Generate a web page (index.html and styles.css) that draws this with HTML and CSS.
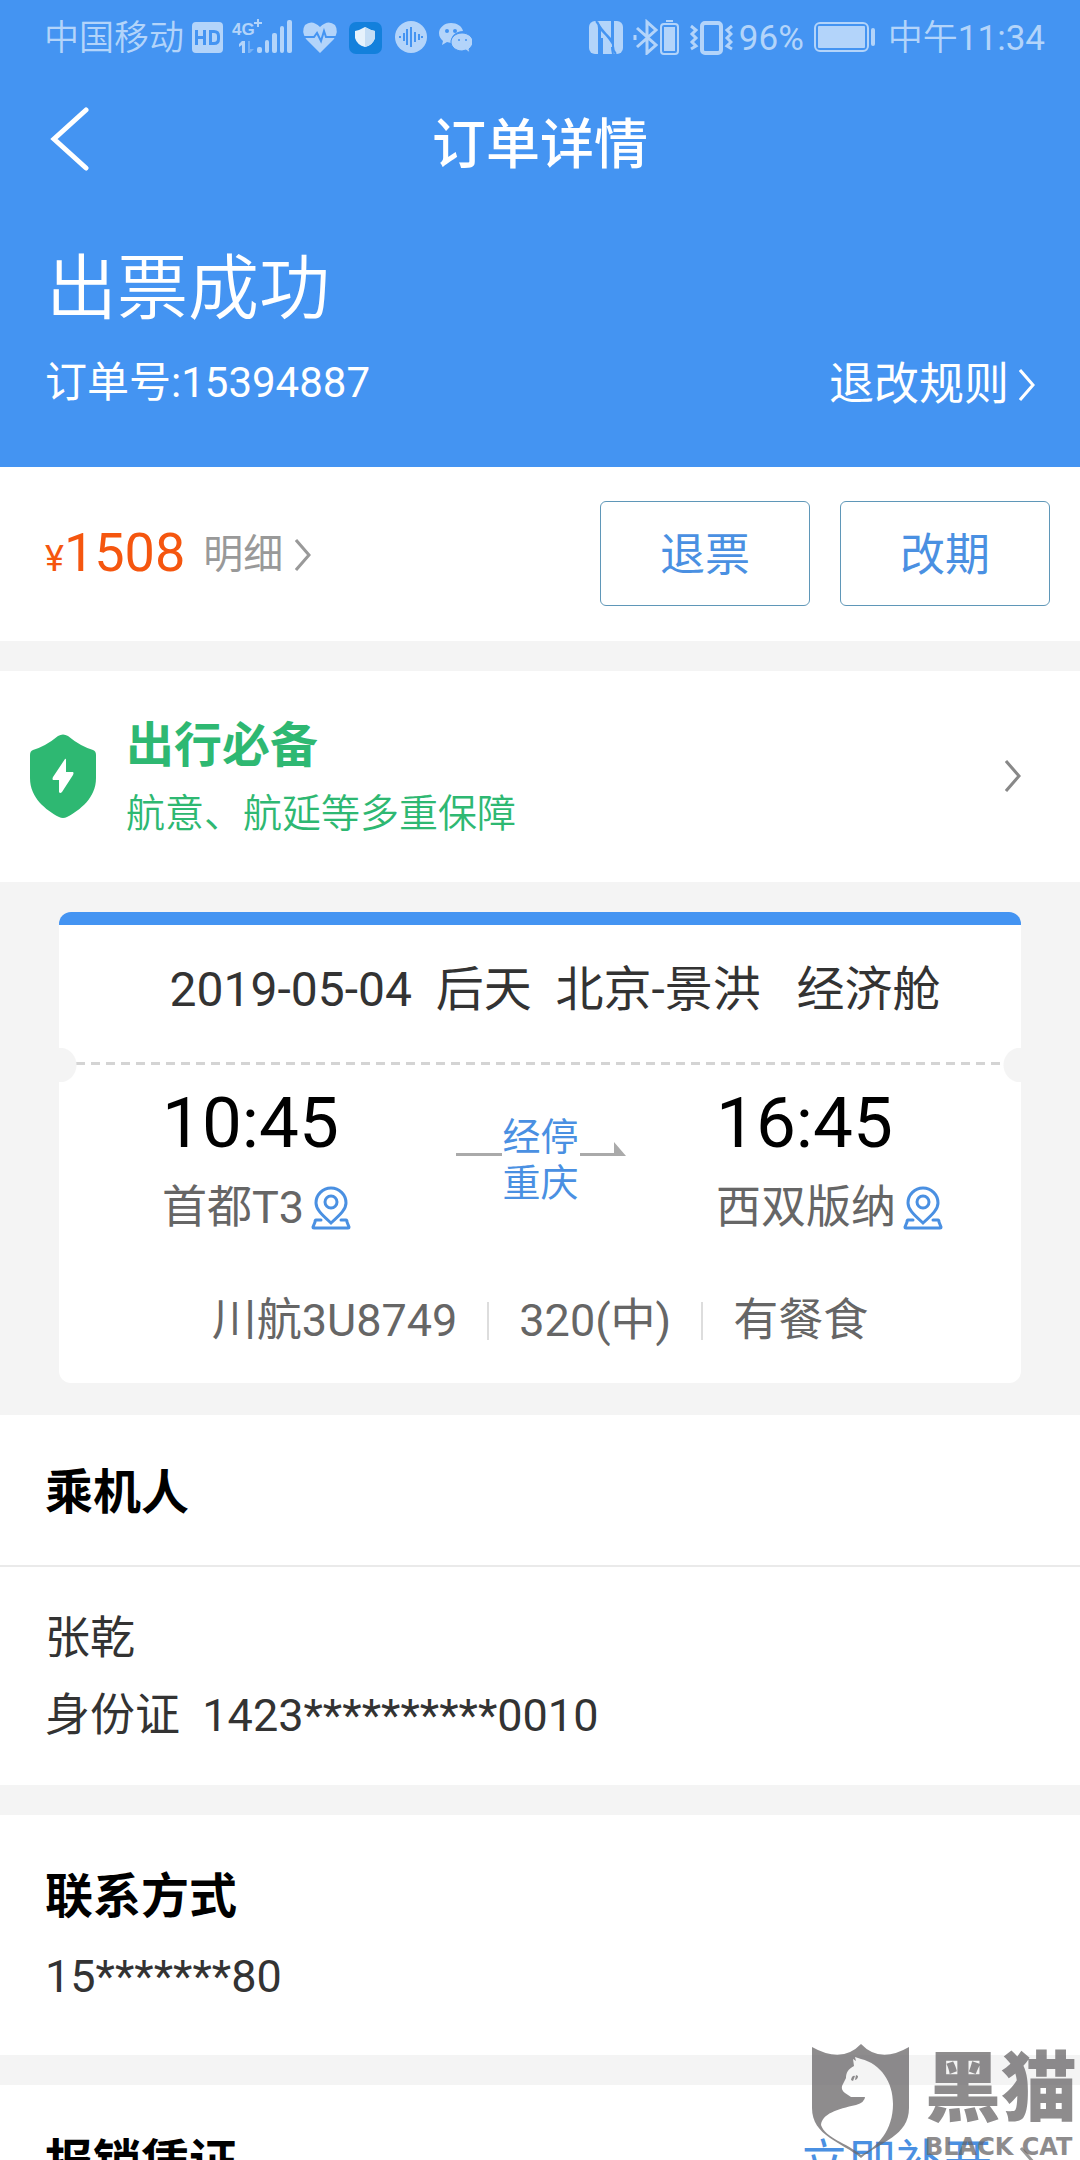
FILE: index.html
```html
<!DOCTYPE html>
<html lang="zh-CN">
<head>
<meta charset="utf-8">
<meta name="viewport" content="width=device-width, initial-scale=1">
<title>订单详情</title>
<link rel="stylesheet" href="styles.css">
</head>
<body>
<div class="app">
  <header class="hero">
    <div class="status">
      <div class="status-group">
        <span class="status-carrier">中国移动</span>
        <svg class="icon-status" width="280" height="36" viewBox="0 0 280 36" aria-hidden="true">
          <g fill="#b3d4fa">
            <path fill-rule="evenodd" d="M4 3H27a4 4 0 0 1 4 4V30a4 4 0 0 1-4 4H4a4 4 0 0 1-4-4V7a4 4 0 0 1 4-4ZM3 11V26H6V20H11V26H14V11H11V17H6V11ZM17 11V26H22Q28 26 28 20V17Q28 11 22 11ZM20 14H22Q25 14 25 17V20Q25 23 22 23H20Z"/>
            <text x="40" y="16" class="net-label">4G</text>
            <path d="M62 3h3V0h2v3h3v2h-3v3h-2V5h-3ZM50 22h3v12h-3V26l-3 2v-3Z"/>
            <path d="M56 22h2v8h4l-4 4h-2Z" opacity=".45"/>
            <rect x="65" y="28" width="5" height="6" rx="2"/>
            <rect x="73" y="21" width="4" height="13" rx="2"/>
            <rect x="80" y="14" width="5" height="20" rx="2"/>
            <rect x="88" y="7" width="4" height="27" rx="2"/>
            <rect x="95" y="1" width="5" height="33" rx="2"/>
            <path d="M128 34 114 20Q109 12 113 6Q120 0 128 8Q136 0 143 6Q147 12 142 20Z"/>
            <circle cx="219" cy="18" r="16"/>
            <path d="M259 4c-7 0-12 5-12 10 0 4 2 6 4 8l-1 4 5-3 4 1c-1-7 5-12 12-12-1-5-6-8-12-8Z"/>
            <path d="M270 14c-6 0-11 4-11 9s5 9 11 9l4-1 4 3-1-4c2-2 4-4 4-7 0-5-5-9-11-9Z" stroke="#4494f2"/>
          </g>
          <g fill="none" stroke="#4494f2" stroke-width="2">
            <path d="M112 18H122L125 14 129 22 132 12 134 18H144"/>
            <path d="M208 17v2M212 14v8M215 10v16M219 8v20M223 13v10M227 15v6M230 17v2"/>
          </g>
          <rect x="157" y="3" width="33" height="32" rx="7" fill="#1380dc"/>
          <path d="M173 8Q178 11 183 12V19Q181 26 173 28Q165 26 163 19V12Q168 11 173 8Z" fill="#e6f2fc"/>
          <path d="M173 8V28Q181 26 183 19V12Q178 11 173 8Z" fill="#c4ddf5"/>
          <g fill="#4494f2"><circle cx="255" cy="12" r="2"/><circle cx="263" cy="12" r="2"/><circle cx="267" cy="21" r="1"/><circle cx="274" cy="21" r="1"/></g>
        </svg>
      </div>
      <div class="status-group">
        <svg class="icon-radio" width="144" height="36" viewBox="0 0 144 36" aria-hidden="true">
          <rect x="0" y="2" width="34" height="33" rx="6" fill="#b3d4fa"/>
          <path d="M7 2Q10 5 10 9V35M24 35Q23 31 23 28" fill="none" stroke="#4494f2" stroke-width="2"/>
          <path d="M9 2Q11 8 22 19V2H24V28Q22 22 12 12V35H10V9Z" fill="#4494f2"/>
          <path d="M24 2V27Q24 32 27 35M13 19V35" fill="none" stroke="#4494f2" stroke-width="2"/>
          <path d="M48 9 67 26 58 34V3L67 11 48 28M46 16v5" fill="none" stroke="#b3d4fa" stroke-width="3"/>
          <rect x="72" y="5" width="17" height="30" rx="3" fill="none" stroke="#b3d4fa" stroke-width="2"/>
          <path d="M75 8h11v24H75ZM77 1h7v2h-7Z" fill="#b3d4fa"/>
          <rect x="113" y="4" width="19" height="30" rx="3" fill="none" stroke="#b3d4fa" stroke-width="4"/>
          <path d="M102 7l5 4-4 4 4 4-4 4 4 4-5 3M143 7l-5 4 4 4-4 4 4 4-4 4 5 3" fill="none" stroke="#b3d4fa" stroke-width="3"/>
        </svg>
        <span class="status-figure">96%</span>
        <svg class="icon-battery" width="62" height="30" viewBox="0 0 62 30" aria-hidden="true">
          <rect x="1" y="1" width="53" height="28" rx="5" fill="none" stroke="#b3d4fa" stroke-width="2"/>
          <rect x="4" y="4" width="47" height="22" rx="1" fill="#b3d4fa"/>
          <rect x="57" y="6" width="4" height="18" rx="2" fill="#b3d4fa"/>
        </svg>
        <span>中午<span class="status-figure">11:34</span></span>
      </div>
    </div>

    <div class="nav">
      <button class="back" type="button" aria-label="返回">
        <svg width="40" height="64" viewBox="0 0 40 64"><path d="M36 3 4 32 36 61" fill="none" stroke="#fff" stroke-width="5" stroke-linecap="round"/></svg>
      </button>
      <h1 class="nav-title">订单详情</h1>
    </div>

    <p class="order-state">出票成功</p>
    <div class="order-meta">
      <span>订单号:15394887</span>
      <a class="rules" href="#rules">退改规则
        <svg class="chevron" width="16" height="32" viewBox="0 0 16 32"><path d="M1 1 14 16 1 31"/></svg>
      </a>
    </div>
  </header>

  <section class="price-row">
    <span class="price"><span class="price-unit">¥</span>1508</span>
    <a class="price-detail" href="#detail">明细
      <svg class="chevron" width="16" height="32" viewBox="0 0 16 32"><path d="M1 1 14 16 1 31"/></svg>
    </a>
    <div class="actions">
      <button class="action" type="button">退票</button>
      <button class="action" type="button">改期</button>
    </div>
  </section>

  <a class="insurance" href="#insurance">
    <svg class="shield" width="66" height="84" viewBox="0 0 66 84" aria-hidden="true">
      <path d="M28 2Q33-1 38 2Q50 12 63 16Q66 17 66 21V44C66 64 50 76 37 83Q33 85 29 83C16 76 0 64 0 44V21Q0 17 3 16Q16 12 28 2Z" fill="#2eb872"/>
      <path d="M35 25Q36 24 36 26V38H43Q44 39 43 41L32 58Q30 60 29 58V46H23Q22 45 23 43Z" fill="#fff"/>
    </svg>
    <span class="insurance-text">
      <strong class="insurance-title">出行必备</strong>
      <span class="insurance-sub">航意、航延等多重保障</span>
    </span>
    <svg class="chevron" width="16" height="32" viewBox="0 0 16 32"><path d="M1 1 14 16 1 31"/></svg>
  </a>

  <div class="ticket-area">
    <article class="ticket">
      <h2 class="ticket-title">2019-05-04&nbsp; 后天&nbsp; 北京-景洪&nbsp;&nbsp; 经济舱</h2>
      <div class="tear"></div>
      <div class="route">
        <div class="stop">
          <span class="time">10:45</span>
          <span class="airport">首都T3
            <svg class="pin" width="40" height="44" viewBox="0 0 40 44"><path d="M20 37C10 28 5 23 5 17a15 15 0 0 1 30 0C35 23 30 28 20 37Z"/><circle cx="20" cy="16" r="6"/><path d="M10 34H5Q4 34 4 36L2 41Q2 42 3 42H37Q38 42 38 41L36 36Q36 34 35 34H30"/></svg>
          </span>
        </div>
        <div class="via">
          <svg width="46" height="38" viewBox="0 0 46 38"><path d="M0 12H46V15H0Z" fill="#aaa"/></svg>
          <span class="via-text">经停<br>重庆</span>
          <svg width="46" height="38" viewBox="0 0 46 38"><path d="M0 12H34V1L46 15H0Z" fill="#aaa"/></svg>
        </div>
        <div class="stop">
          <span class="time">16:45</span>
          <span class="airport">西双版纳
            <svg class="pin" width="40" height="44" viewBox="0 0 40 44"><path d="M20 37C10 28 5 23 5 17a15 15 0 0 1 30 0C35 23 30 28 20 37Z"/><circle cx="20" cy="16" r="6"/><path d="M10 34H5Q4 34 4 36L2 41Q2 42 3 42H37Q38 42 38 41L36 36Q36 34 35 34H30"/></svg>
          </span>
        </div>
      </div>
      <ul class="facts">
        <li>川航3U8749</li>
        <li>320(中)</li>
        <li>有餐食</li>
      </ul>
    </article>
  </div>

  <section class="panel">
    <h2 class="panel-head">乘机人</h2>
    <div class="passenger">
      <p class="line">张乾</p>
      <p class="line">身份证&nbsp; 1423**********0010</p>
    </div>
  </section>

  <section class="panel contact">
    <h2 class="panel-title">联系方式</h2>
    <p class="line">15*******80</p>
  </section>

  <section class="panel voucher">
    <h2 class="panel-title">报销凭证</h2>
    <a class="voucher-link" href="#voucher">立即补开
      <svg class="chevron" width="16" height="32" viewBox="0 0 16 32"><path d="M1 1 14 16 1 31"/></svg>
    </a>
  </section>

  <div class="watermark">
    <svg width="98" height="116" viewBox="0 0 98 116" aria-hidden="true">
      <path fill="#696668" fill-rule="evenodd" d="M0 3Q30 20 49 0Q68 20 97 3V64C97 92 68 98 49 114C30 98 0 92 0 64ZM9 81C13 94 35 99 49 111C66 103 81 86 81 60C81 38 69 20 49 15L43 13 44 17 41 15 42 22C36 25 34 29 34 34L30 42Q29 46 33 49L39 53H53Q53 58 44 61C25 65 10 70 9 81Z"/>
      <path d="M39 36Q40 31 43 32L41 37ZM43 36 44 31 46 32Q46 35 43 36Z" fill="#696668"/>
    </svg>
    <div class="watermark-text">
      <span class="watermark-cn">黑猫</span>
      <span class="watermark-en">BLACK CAT</span>
    </div>
  </div>
</div>
</body>
</html>
```
FILE: styles.css
```css
* {
  box-sizing: border-box;
}

body,
h1,
h2,
p,
ul {
  margin: 0;
  padding: 0;
}

body {
  background: #f4f4f4;
  color: #333;
  font-family: Roboto, "Noto Sans CJK SC", sans-serif;
  font-size: 45px;
  line-height: 60px;
}

a {
  color: inherit;
  text-decoration: none;
}

button {
  background: none;
  border: 0;
  color: inherit;
  font: inherit;
  padding: 0;
}

svg {
  display: block;
  flex: none;
}

.app {
  height: 100vh;
  overflow: hidden;
  position: relative;
}

.chevron {
  fill: none;
  stroke: currentColor;
  stroke-width: 3;
}

/* Header */

.hero {
  background: #4494f2;
  color: #fff;
  padding-bottom: 52px;
}

.status {
  align-items: center;
  color: #b3d4fa;
  display: flex;
  font-size: 35px;
  font-weight: 350;
  height: 74px;
  justify-content: space-between;
  line-height: 40px;
  padding: 0 35px 0 44px;
}

.status-group {
  align-items: center;
  display: flex;
}

.status-group > span {
  padding-top: 4px;
}

.status-carrier {
  margin-right: 8px;
}

.status-figure {
  font-weight: 400;
}

.net-label {
  font-family: "Liberation Sans", sans-serif;
  font-size: 17px;
  font-weight: 700;
}

.icon-radio {
  margin-right: 6px;
}

.icon-battery {
  margin: 0 12px 0 10px;
}

.nav {
  align-items: center;
  display: grid;
  grid-template-columns: 1fr auto 1fr;
  height: 138px;
  padding: 0 50px;
}

.back {
  justify-self: start;
  padding-bottom: 8px;
}

.nav-title {
  font-size: 54px;
  font-weight: 500;
  line-height: 72px;
  padding-top: 6px;
}

.order-state {
  font-size: 71px;
  font-weight: 350;
  line-height: 104px;
  margin-top: 25px;
  padding-left: 46px;
}

.order-meta {
  align-items: center;
  display: flex;
  font-size: 42px;
  justify-content: space-between;
  margin-top: 10px;
  padding: 0 45px;
}

.rules {
  align-items: center;
  display: flex;
  font-size: 45px;
  gap: 10px;
  padding-top: 4px;
}

/* Price and actions */

.price-row {
  align-items: center;
  background: #fff;
  display: flex;
  padding: 34px 30px 35px 45px;
}

.price {
  color: #f5560f;
  font-size: 54px;
  padding-top: 4px;
}

.price-unit {
  font-size: 36px;
}

.price-detail {
  align-items: center;
  color: #999;
  display: flex;
  font-size: 40px;
  gap: 12px;
  margin-left: 18px;
  padding-top: 2px;
}

.actions {
  display: flex;
  gap: 30px;
  margin-left: auto;
}

.action {
  border: 1px solid #5f97b8;
  border-radius: 6px;
  color: #4a90e2;
  height: 105px;
  padding-top: 4px;
  width: 210px;
}

/* Insurance */

.insurance {
  align-items: center;
  background: #fff;
  color: #888;
  display: flex;
  margin-top: 30px;
  padding: 37px 59px 38px 30px;
}

.insurance-text {
  color: #2eb872;
  display: flex;
  flex: 1;
  flex-direction: column;
  gap: 4px;
  margin-left: 30px;
  padding-top: 4px;
}

.insurance-title {
  font-size: 48px;
  line-height: 68px;
}

.insurance-sub {
  font-size: 39px;
  font-weight: 350;
}

/* Ticket */

.ticket-area {
  padding: 30px 59px 32px;
}

.ticket {
  background: #fff;
  border-radius: 12px;
  border-top: 13px solid #4494f2;
  padding-bottom: 32px;
}

.ticket-title {
  font-size: 48px;
  font-weight: 400;
  line-height: 68px;
  padding: 31px 0 24px 30px;
  text-align: center;
}

.tear {
  background:
    radial-gradient(circle at 0 50%, #f4f4f4 17px, transparent 18px),
    radial-gradient(circle at 100% 50%, #f4f4f4 17px, transparent 18px),
    repeating-linear-gradient(90deg, #d4d4d4 0 9px, transparent 9px 15px) 17px 14px / calc(100% - 34px) 3px no-repeat;
  height: 34px;
}

.route {
  display: flex;
  justify-content: space-between;
  padding: 0 78px 0 103px;
}

.stop {
  display: flex;
  flex-direction: column;
}

.time {
  color: #000;
  font-size: 71px;
  line-height: 82px;
}

.airport {
  align-items: center;
  color: #666;
  display: flex;
  gap: 7px;
  margin-top: 14px;
}

.pin {
  fill: none;
  stroke: #4a90e2;
  stroke-linecap: round;
  stroke-width: 3;
}

.via {
  align-items: center;
  display: flex;
  gap: 1px;
  margin-left: 14px;
}

.via-text {
  color: #4a90e2;
  font-size: 38px;
  line-height: 46px;
}

.facts {
  color: #666;
  display: flex;
  justify-content: center;
  list-style: none;
  margin-top: 53px;
}

.facts li {
  align-items: center;
  display: flex;
}

.facts li + li::before {
  background: #ddd;
  content: "";
  height: 38px;
  margin: 0 30px;
  width: 2px;
}

/* Panels */

.panel {
  background: #fff;
}

.panel + .panel {
  margin-top: 30px;
}

.panel-head,
.panel-title {
  color: #000;
  font-size: 48px;
  font-weight: 700;
  line-height: 68px;
}

.panel-head {
  border-bottom: 2px solid #eaeaea;
  padding: 44px 45px 38px;
}

.passenger {
  display: flex;
  flex-direction: column;
  gap: 17px;
  padding: 42px 45px 39px;
}

.contact {
  padding: 48px 45px 48px;
}

.contact .line {
  margin-top: 16px;
}

.voucher {
  align-items: center;
  display: flex;
  justify-content: space-between;
  padding: 44px 44px 38px 45px;
}

.voucher-link {
  align-items: center;
  color: #4a90e2;
  display: flex;
  font-size: 48px;
  gap: 28px;
}

.voucher-link .chevron {
  color: #999;
}

/* Watermark */

.watermark {
  bottom: 0;
  color: #696668;
  display: flex;
  gap: 15px;
  opacity: .75;
  position: absolute;
  right: 3px;
}

.watermark-text {
  display: flex;
  flex-direction: column;
}

.watermark-cn {
  font-size: 76px;
  font-weight: 900;
  line-height: 90px;
}

.watermark-en {
  font-family: "DejaVu Sans", sans-serif;
  font-size: 24px;
  font-weight: 700;
  line-height: 26px;
}
```
